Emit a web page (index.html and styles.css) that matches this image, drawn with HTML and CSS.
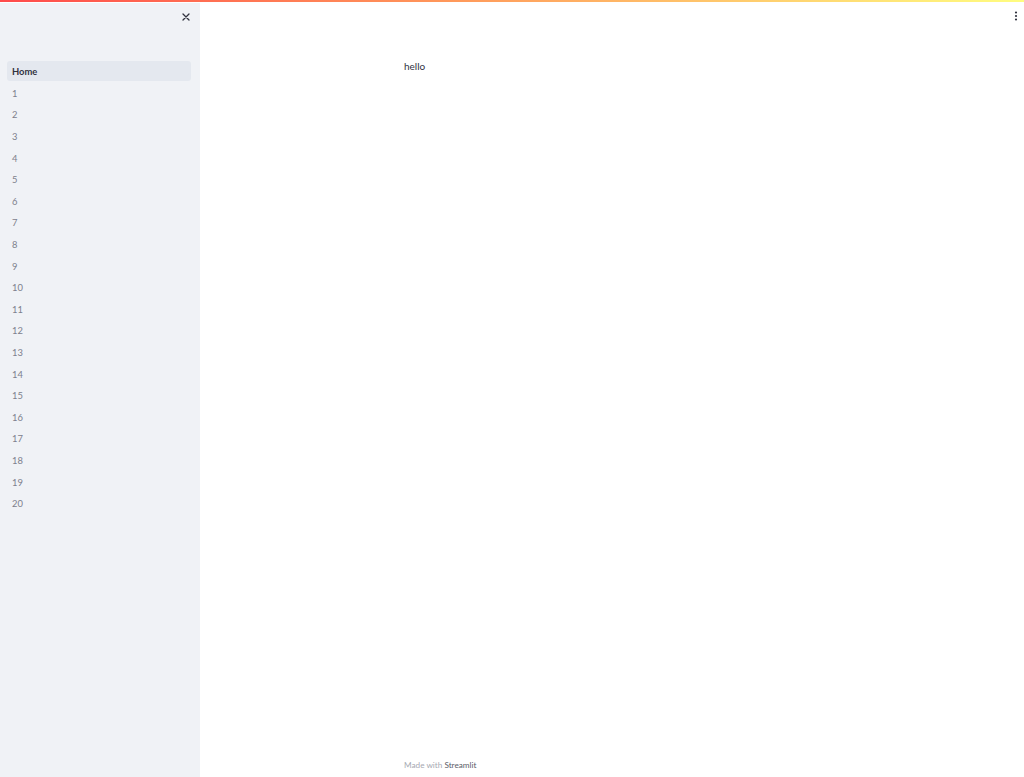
FILE: index.html
```html
<!DOCTYPE html>
<html lang="en">
<head>
<meta charset="utf-8">
<title>Streamlit</title>
<link rel="stylesheet" href="styles.css">
</head>
<body>
<div class="decoration"></div>
<div class="app">
  <aside class="sidebar">
    <div class="sidebar-head">
      <button class="close-btn" aria-label="Close sidebar">
        <svg width="10" height="10" viewBox="0 0 10 10"><path d="M2 2 L8 8 M8 2 L2 8" stroke="#31333f" stroke-width="1.3" stroke-linecap="round"/></svg>
      </button>
    </div>
    <nav class="nav">
      <a class="nav-item active">Home</a>
      <a class="nav-item">1</a>
      <a class="nav-item">2</a>
      <a class="nav-item">3</a>
      <a class="nav-item">4</a>
      <a class="nav-item">5</a>
      <a class="nav-item">6</a>
      <a class="nav-item">7</a>
      <a class="nav-item">8</a>
      <a class="nav-item">9</a>
      <a class="nav-item">10</a>
      <a class="nav-item">11</a>
      <a class="nav-item">12</a>
      <a class="nav-item">13</a>
      <a class="nav-item">14</a>
      <a class="nav-item">15</a>
      <a class="nav-item">16</a>
      <a class="nav-item">17</a>
      <a class="nav-item">18</a>
      <a class="nav-item">19</a>
      <a class="nav-item">20</a>
    </nav>
  </aside>
  <main class="main">
    <header class="toolbar">
      <button class="menu-btn" aria-label="Main menu">
        <svg width="4" height="10" viewBox="0 0 4 10"><circle cx="2" cy="1.5" r="1.1" fill="#31333f"/><circle cx="2" cy="5" r="1.1" fill="#31333f"/><circle cx="2" cy="8.5" r="1.1" fill="#31333f"/></svg>
      </button>
    </header>
    <section class="content">
      <p class="text">hello</p>
    </section>
    <footer class="footer">Made with <span class="brand">Streamlit</span></footer>
  </main>
</div>
</body>
</html>
```

FILE: styles.css
```css
html, body {
  margin: 0;
  padding: 0;
  background: #ffffff;
  font-family: "Lato", "Open Sans", sans-serif;
  color: #31333f;
}
.decoration {
  height: 2px;
  background: linear-gradient(90deg, #ff4b4b 0%, #ff9a5b 45%, #fffd80 100%);
}
.app {
  display: flex;
  height: 775px;
}
.sidebar {
  width: 200px;
  flex: none;
  background: #f0f2f6;
  margin-top: 1px;
  box-sizing: border-box;
  padding: 0 9px 0 7px;
}
.sidebar-head {
  height: 58px;
  display: flex;
  justify-content: flex-end;
  align-items: flex-start;
}
.close-btn, .menu-btn {
  border: 0;
  background: transparent;
  padding: 0;
  display: flex;
  align-items: center;
  justify-content: center;
  cursor: pointer;
}
.close-btn {
  width: 14px;
  height: 14px;
  margin-top: 7px;
  margin-right: -2px;
}
.nav {
  display: flex;
  flex-direction: column;
}
.nav-item {
  height: 21.6px;
  display: flex;
  align-items: center;
  padding-left: 5px;
  font-size: 9.4px;
  color: #7d808c;
  border-radius: 3px;
}
.nav-item.active {
  height: 20px;
  margin-bottom: 1.6px;
  background: #e4e8ef;
  color: #31333f;
  font-weight: 700;
}
.main {
  flex: 1;
  display: flex;
  flex-direction: column;
}
.toolbar {
  height: 26px;
  display: flex;
  justify-content: flex-end;
  align-items: center;
  padding-right: 4px;
}
.menu-btn {
  width: 8px;
  height: 12px;
  margin-top: 1px;
}
.content {
  flex: 1;
  padding-left: 204px;
}
.text {
  margin: 32px 0 0;
  font-size: 10px;
  color: #31333f;
}
.footer {
  padding: 0 0 7px 204px;
  font-size: 8.2px;
  color: #a6a9b2;
}
.brand {
  color: #5a5d68;
}
```
